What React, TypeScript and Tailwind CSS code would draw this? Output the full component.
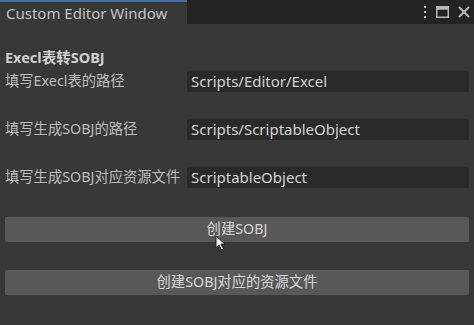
import React from 'react';

const font = { fontFamily: '"Noto Sans", "Noto Sans CJK SC", sans-serif' };

const fields = [
    { label: '填写Execl表的路径', value: 'Scripts/Editor/Excel', gap: 'mt-[5px]' },
    { label: '填写生成SOBJ的路径', value: 'Scripts/ScriptableObject', gap: 'mt-[27px]' },
    { label: '填写生成SOBJ对应资源文件', value: 'ScriptableObject', gap: 'mt-[27px]' },
];

const App = () => {
    return (
        <div className="w-[474px] h-[325px] bg-[#383838] flex flex-col overflow-hidden" style={font}>
            {/* 标题栏 */}
            <div className="h-[24px] bg-[#232323] flex items-stretch">
                <div className="w-[187px] bg-[#383838] border-t-2 border-[#3a6fa5] pl-[6px] flex items-center text-[15px] text-[#c4c4c4] leading-none">
                    Custom Editor Window
                </div>
                <div className="flex-1 flex items-center justify-end gap-[9px] pr-[4px] text-[#b8b8b8]">
                    <svg width="4" height="12" viewBox="0 0 4 12">
                        <rect x="1" y="0" width="2" height="2" fill="currentColor" />
                        <rect x="1" y="5" width="2" height="2" fill="currentColor" />
                        <rect x="1" y="10" width="2" height="2" fill="currentColor" />
                    </svg>
                    <svg width="13" height="12" viewBox="0 0 13 12">
                        <rect x="0.75" y="0.75" width="11.5" height="10.5" fill="none" stroke="currentColor" strokeWidth="1.5" />
                        <rect x="0.75" y="0.75" width="11.5" height="3" fill="currentColor" />
                    </svg>
                    <svg width="12" height="12" viewBox="0 0 12 12">
                        <path d="M1 1 L11 11 M11 1 L1 11" stroke="currentColor" strokeWidth="2" />
                    </svg>
                </div>
            </div>

            {/* 内容 */}
            <div className="flex flex-col px-[5px] pt-[25px] relative">
                <div className="text-[14.5px] font-bold text-[#d0d0d0] leading-[17px]">Execl表转SOBJ</div>

                {fields.map((f) => (
                    <div key={f.label} className={`flex items-center ${f.gap}`}>
                        <div className="w-[182px] text-[14.3px] text-[#bdbdbd] leading-none whitespace-nowrap">{f.label}</div>
                        <div className="flex-1 h-[21px] bg-[#2a2a2a] rounded-[2px] px-[4px] flex items-center text-[15px] text-[#d4d4d4] leading-none">
                            {f.value}
                        </div>
                    </div>
                ))}

                <button className="mt-[29px] h-[25px] bg-[#585858] rounded-[2px] text-[14.3px] text-[#d8d8d8] leading-none">
                    创建SOBJ
                </button>
                <button className="mt-[28px] h-[25px] bg-[#585858] rounded-[2px] text-[14.3px] text-[#d8d8d8] leading-none">
                    创建SOBJ对应的资源文件
                </button>

                {/* 鼠标指针 */}
                <svg className="absolute left-[215px] top-[211px]" width="11" height="16" viewBox="0 0 11 16">
                    <path d="M1 1 L1 13 L4 10 L6.5 15 L8.5 14 L6 9 L10 9 Z" fill="#f0f0f0" stroke="#222" strokeWidth="1" />
                </svg>
            </div>
        </div>
    );
};

export default App;
